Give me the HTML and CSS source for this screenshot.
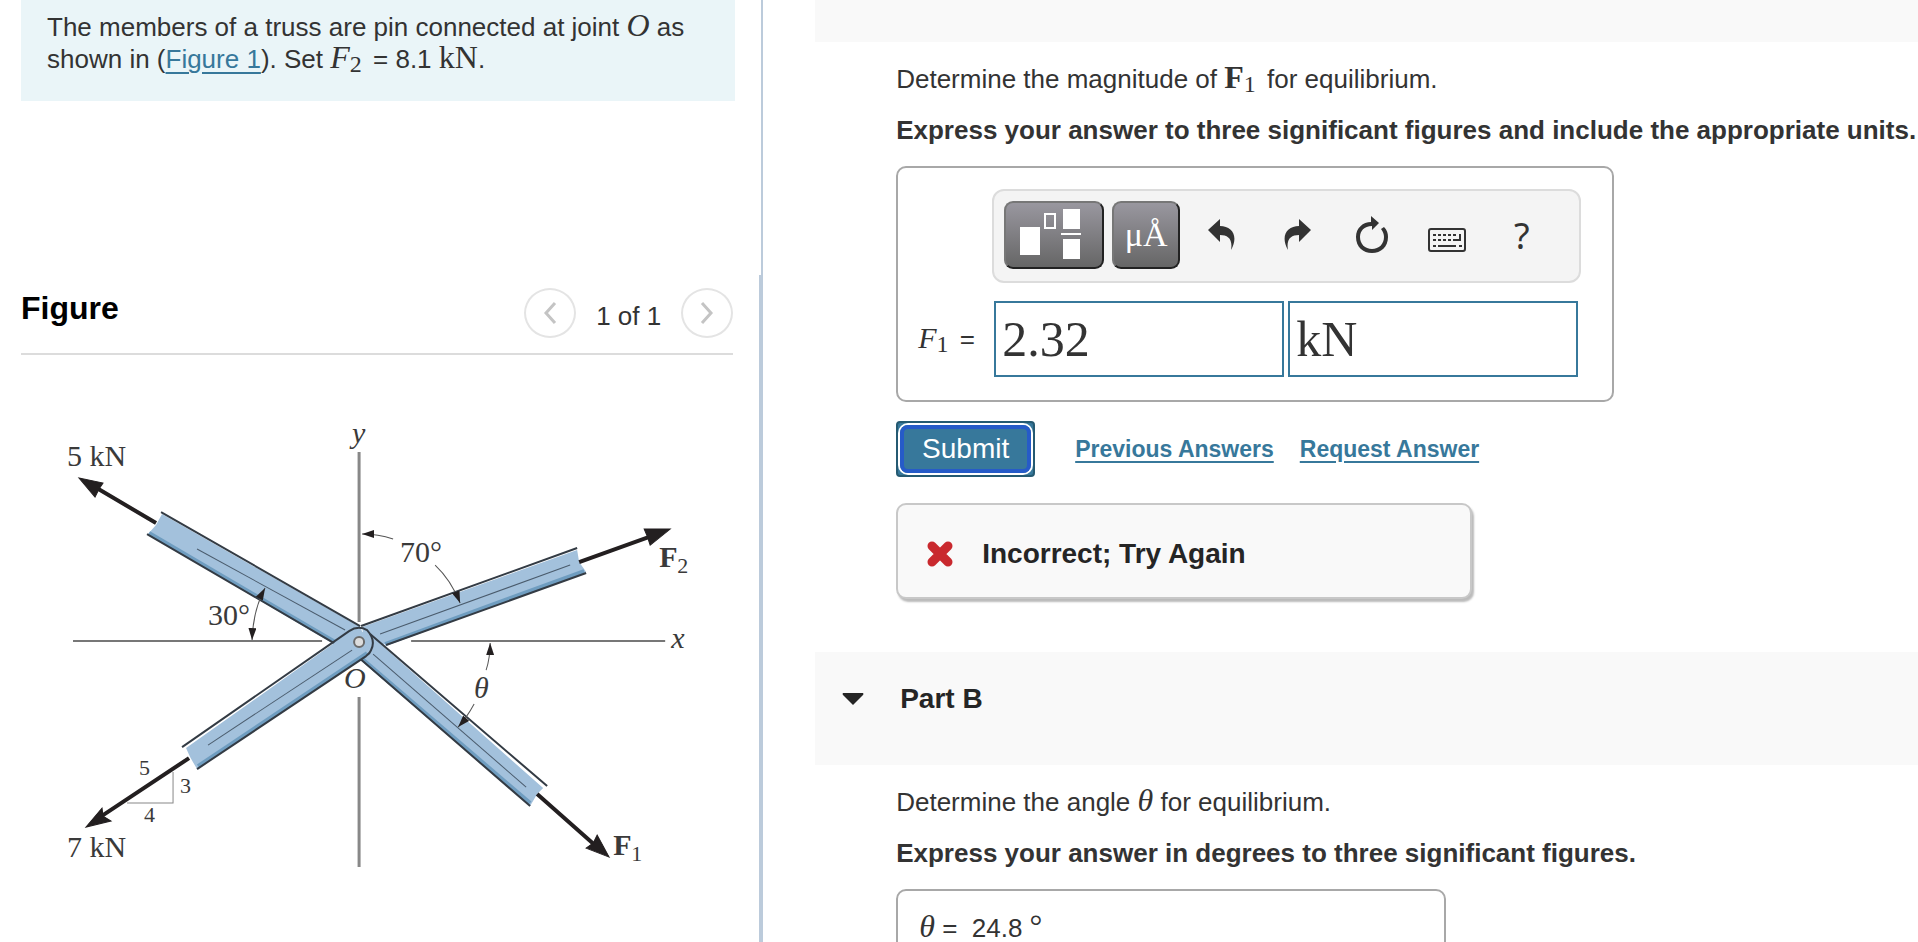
FILE: index.html
```html
<!DOCTYPE html>
<html lang="en">
<head>
  <meta charset="UTF-8">
  <title>Truss Equilibrium</title>
  <link rel="stylesheet" href="styles.css">
</head>
<body>
  <!-- Problem and figure -->
  <aside class="left">
    <section class="problem">
      <p class="intro">The members of a truss are pin connected at joint <i class="math">O</i> as shown in (<a href="#figure">Figure 1</a>). Set <i class="math">F</i><span class="math sub">2</span> = 8.1 <span class="math">kN</span>.</p>
    </section>

    <section class="figure" id="figure">
      <div class="figure-head">
        <h2>Figure</h2>
        <button class="round" aria-label="Previous figure">
          <svg width="14" height="24" viewBox="0 0 14 24"><path d="M12 2 L3 12 L12 22"/></svg>
        </button>
        <span class="count">1 of 1</span>
        <button class="round" aria-label="Next figure">
          <svg width="14" height="24" viewBox="0 0 14 24"><path d="M2 2 L11 12 L2 22"/></svg>
        </button>
      </div>

      <svg class="truss" viewBox="21 400 712 490">
        <defs>
          <marker id="tip" viewBox="0 0 12 8" refX="12" refY="4" markerWidth="12" markerHeight="8" markerUnits="userSpaceOnUse" orient="auto-start-reverse">
            <path d="M0 0 L12 4 L0 8 Z" fill="#231f20"/>
          </marker>
        </defs>

        <!-- axes -->
        <g class="axis">
          <path d="M359 452 V622 M359 697 V867"/>
          <path class="thin" d="M73 641 H322 M411 641 H665"/>
        </g>

        <!-- 5 kN member -->
        <path class="bar" d="M162 514 L360 627 L366 640 L335 645 L148 534 L156 525 Z"/>
        <path class="low" d="M149 533 L335 642"/>
        <path class="edge" d="M161 512 L360 626 M147 534 L334 643"/>
        <path class="mid" d="M197 549 L345 630"/>

        <!-- F2 member -->
        <path class="bar" d="M362 627 L577 550 L579 562 L586 572 L390 644 L365 645 Z"/>
        <path class="low" d="M385 644 L584 571"/>
        <path class="edge" d="M361 626 L577 548 M386 645 L586 573"/>
        <path class="mid" d="M380 634 L570 565"/>

        <!-- F1 member -->
        <path class="bar" d="M368 633 L543 788 L537 794 L530 806 L358 658 Z"/>
        <path class="low" d="M361 658 L530 803"/>
        <path class="edge" d="M370 634 L547 786 M358 657 L530 806"/>
        <path class="mid" d="M373 654 L526 787"/>

        <!-- 7 kN member with the pin -->
        <path class="bar" d="M186 748 L351 631 A15 15 0 0 1 368 654 L197 769 L190 757 Z"/>
        <path class="low" d="M198 766 L367 653"/>
        <path class="edge" d="M182 747 L349 631 Q358 625 367 630 Q376 640 371 650 Q370 653 366 656 L197 769"/>
        <path class="mid" d="M208 745 L352 650"/>
        <circle class="pin" cx="359" cy="642" r="5"/>

        <!-- forces -->
        <g class="force">
          <path d="M156 523 L95 487 M579 562 L654 535 M189 758 L100 817 M537 794 L598 848"/>
        </g>
        <g class="head">
          <path d="M79 478 L103 483 L99 489 L95 497 Z"/>
          <path d="M670 529 L644 529 L647 536 L650 545 Z"/>
          <path d="M86 827 L102 808 L103 816 L111 821 Z"/>
          <path d="M609 857 L597 835 L593 843 L586 848 Z"/>
        </g>

        <!-- angles -->
        <g class="arc">
          <path d="M265 588 Q253 610 252 640" marker-start="url(#tip)" marker-end="url(#tip)"/>
          <path d="M362 534 Q378 534 393 539" marker-start="url(#tip)"/>
          <path d="M435 565 Q451 580 460 603" marker-end="url(#tip)"/>
          <path d="M490 643 Q490 658 486 670" marker-start="url(#tip)"/>
          <path d="M474 704 Q467 717 458 727" marker-end="url(#tip)"/>
          <path class="slope" d="M127 803 H173 V772"/>
        </g>

        <g class="label">
          <text x="67" y="466">5 kN</text>
          <text x="67" y="857">7 kN</text>
          <text x="208" y="625">30°</text>
          <text x="400" y="562">70°</text>
          <text class="it" x="352" y="443">y</text>
          <text class="it" x="671" y="648">x</text>
          <text class="it" x="344" y="688">O</text>
          <text class="it" x="474" y="698">θ</text>
          <text class="vec" x="659" y="567">F</text>
          <text class="vec" x="613" y="855">F</text>
          <text class="small" x="677" y="573">2</text>
          <text class="small" x="631" y="861">1</text>
          <text class="small" x="139" y="775">5</text>
          <text class="small" x="180" y="793">3</text>
          <text class="small" x="144" y="822">4</text>
        </g>
      </svg>
    </section>
  </aside>

  <!-- Parts -->
  <main class="right">
    <div class="band band-a"></div>
    <section class="part">
      <p>Determine the magnitude of <b class="math">F</b><span class="math sub">1</span> for equilibrium.</p>
      <p class="express">Express your answer to three significant figures and include the appropriate units.</p>

      <form class="answer">
        <div class="toolbar">
          <button type="button" class="tool tool-wide" aria-label="Templates">
            <svg width="64" height="54" viewBox="2 0 64 54">
              <path fill="#fff" d="M0 19 H20 V47 H0 Z M43 1 H60 V21 H43 Z M43 31 H60 V51 H43 Z M41 25 H61 V27 H41 Z"/>
              <path fill="none" stroke="#fff" stroke-width="2" d="M25 6 H35 V20 H25 Z"/>
            </svg>
          </button>
          <button type="button" class="tool">μÅ</button>
          <button type="button" class="plain" aria-label="Undo">
            <svg width="28" height="32" viewBox="0 0 28 32"><path d="M0 11 L12 0 V7 C24 7 31 17 23 31 C25 20 20 16 12 16 V23 Z"/></svg>
          </button>
          <button type="button" class="plain" aria-label="Redo">
            <svg width="28" height="32" viewBox="0 0 28 32"><path d="M28 11 L16 0 V7 C4 7 -3 17 5 31 C3 20 8 16 16 16 V23 Z"/></svg>
          </button>
          <button type="button" class="plain" aria-label="Reset">
            <svg width="34" height="38" viewBox="0 0 34 38"><path d="M16 0 L24 7 L17 14 V10 C9 10 5 15 5 21 C5 28 10 33 17 33 C24 33 29 28 29 21 C29 18 28 16 26 13 L29 11 C32 14 33 17 33 21 C33 31 26 37 17 37 C8 37 1 31 1 21 C1 12 8 6 16 6 Z"/></svg>
          </button>
          <button type="button" class="plain" aria-label="Keyboard">
            <svg width="40" height="36" viewBox="0 -10 40 36">
              <rect x="2" y="2" width="36" height="22" rx="2" fill="none" stroke="#333" stroke-width="2"/>
              <path fill="none" stroke="#333" stroke-width="2" stroke-dasharray="3 2" d="M6 8 H29 M6 13 H29"/>
              <path fill="none" stroke="#333" stroke-width="2" d="M6 19 H9 M11 19 H29 M32 19 H35 M33 7 V14 M29 13 H34"/>
            </svg>
          </button>
          <button type="button" class="plain help">?</button>
        </div>
        <div class="fields">
          <label for="value"><i class="math">F</i><span class="math sub">1</span> =</label>
          <input type="text" id="value" value="2.32">
          <input type="text" id="units" value="kN" aria-label="Units">
        </div>
      </form>

      <div class="actions">
        <button class="submit">Submit</button>
        <a href="#previous">Previous Answers</a>
        <a href="#request">Request Answer</a>
      </div>

      <div class="feedback">
        <svg width="28" height="28" viewBox="0 0 28 28"><path d="M6 6 L22 22 M22 6 L6 22" stroke="#c9292e" stroke-width="9" stroke-linecap="round"/></svg>
        Incorrect; Try Again
      </div>
    </section>

    <div class="band band-b">
      <svg width="22" height="12" viewBox="0 0 22 12"><path d="M1 0 H21 Q22 1 21 2 L11 12 L1 2 Q0 1 1 0 Z" fill="#252525"/></svg>
      <h3>Part B</h3>
    </div>
    <section class="part">
      <p>Determine the angle <i class="math">θ</i> for equilibrium.</p>
      <p class="express">Express your answer in degrees to three significant figures.</p>
      <div class="result"><i class="math">θ</i> = &nbsp;24.8 <span class="math">°</span></div>
    </section>
  </main>
</body>
</html>
```
FILE: styles.css
```css
* {
  box-sizing: border-box;
}

body {
  display: flex;
  height: 100vh;
  margin: 0;
  overflow: hidden;
  background-color: #fff;
  color: #333;
  font-family: "Liberation Sans", Arial, sans-serif;
  font-size: 26px;
  line-height: 32px;
}

p, h2, h3 {
  margin: 0;
}

a {
  color: #37789b;
  text-decoration-thickness: 2px;
  text-underline-offset: 4px;
}

button {
  font-family: inherit;
  cursor: pointer;
}

/* math runs keep the line height of the text round them */
.math {
  font-family: "Liberation Serif", "Times New Roman", serif;
  font-size: 32px;
  line-height: 1px;
}

.sub {
  position: relative;
  top: 4px;
  margin-right: 4px;
  font-size: 24px;
}

/* left column */
.left {
  display: flex;
  flex: 0 0 calc(40% - 4px);
  flex-direction: column;
  margin-right: 4px;
}

.problem {
  height: 275px;
  padding: 0 26px 0 21px;
  border-right: 2px solid #bccbdb;
}

.intro {
  min-height: 101px;
  padding: 11px 26px;
  background-color: #eaf5f8;
}

.figure {
  flex: 1;
  padding: 13px 26px 0 21px;
  border-right: 4px solid #bccbdb;
}

.figure-head {
  display: flex;
  align-items: center;
  height: 67px;
  padding-bottom: 15px;
  border-bottom: 2px solid #dcdcdc;
}

.figure-head h2 {
  flex: 1;
  margin-bottom: 10px;
  color: #000;
  font-size: 32px;
}

.round {
  display: flex;
  align-items: center;
  justify-content: center;
  width: 52px;
  height: 50px;
  padding: 0;
  border: 2px solid #e4e4e4;
  border-radius: 50%;
  background-color: #fff;
}

.round path {
  fill: none;
  stroke: #c4c4c4;
  stroke-width: 3;
}

.count {
  margin: 6px 20px 0;
}

.truss {
  display: block;
  width: 100%;
  margin-top: 45px;
}

.axis {
  fill: none;
  stroke: #888;
  stroke-width: 3;
}

.thin {
  stroke: #777;
  stroke-width: 2;
}

.bar {
  fill: #a3c1dc;
}

.low {
  fill: none;
  stroke: #6f9dc0;
  stroke-width: 4;
}

.edge {
  fill: none;
  stroke: #333b44;
  stroke-width: 2;
}

.mid {
  fill: none;
  stroke: #4a5b6c;
  stroke-width: 1;
}

.pin {
  fill: #ddd;
  stroke: #6b6b6b;
  stroke-width: 2;
}

.force {
  fill: none;
  stroke: #231f20;
  stroke-width: 4;
}

.head {
  fill: #231f20;
  stroke: #231f20;
}

.arc {
  fill: none;
  stroke: #555;
  stroke-width: 1;
}

.slope {
  stroke: #888;
}

.label {
  fill: #3a3a3a;
  font-family: "Liberation Serif", "Times New Roman", serif;
  font-size: 30px;
}

.it {
  font-style: italic;
}

.vec {
  font-weight: bold;
}

.small {
  font-size: 22px;
}

/* right column */
.right {
  flex: 1;
  min-width: 0;
  padding-left: 48px;
}

.band {
  background-color: #f9f9f9;
}

.band-a {
  height: 42px;
}

.part {
  padding: 21px 0 0 81px;
  white-space: nowrap;
}

.express {
  margin-top: 19px;
  font-weight: bold;
}

.answer {
  width: 718px;
  margin-top: 20px;
  padding: 21px 31px 23px 20px;
  border: 2px solid #a8a8a8;
  border-radius: 10px;
}

.toolbar {
  display: flex;
  align-items: center;
  height: 94px;
  margin-left: 74px;
  padding: 0 10px 2px;
  border: 2px solid #dcdcdc;
  border-radius: 12px;
  background-color: #f4f4f4;
}

.tool {
  width: 68px;
  height: 68px;
  margin-right: 4px;
  padding: 0;
  border: 2px solid #222;
  border-top-color: #777;
  border-left-color: #777;
  border-radius: 9px;
  background: linear-gradient(#99979f, #666);
  color: #fff;
  font-family: "Liberation Serif", serif;
  font-size: 34px;
}

.tool-wide {
  width: 100px;
  margin-right: 8px;
}

.tool svg {
  display: block;
  margin: 0 auto;
  overflow: visible;
}

.plain {
  display: flex;
  align-items: center;
  justify-content: center;
  width: 75px;
  height: 68px;
  padding: 0;
  border: 0;
  background: none;
  color: #333;
  fill: #333;
}

.help {
  font-family: "Noto Sans", sans-serif;
  font-size: 36px;
}

.fields {
  display: flex;
  gap: 4px;
  align-items: center;
  margin-top: 18px;
}

.fields label {
  width: 72px;
}

.fields .math {
  font-size: 30px;
}

.fields .sub {
  font-size: 24px;
}

.fields input {
  width: 290px;
  height: 76px;
  padding: 0 6px;
  border: 2px solid #37789b;
  color: #333;
  font-family: "Liberation Serif", "Times New Roman", serif;
  font-size: 50px;
}

.actions {
  display: flex;
  align-items: center;
  margin-top: 19px;
}

.actions a {
  margin-right: 26px;
  font-size: 23px;
  font-weight: bold;
}

.submit {
  position: relative;
  width: 139px;
  height: 56px;
  margin-right: 40px;
  padding: 0;
  border: 2px solid #255a72;
  border-radius: 4px;
  background-color: #37789b;
  color: #fff;
  font-size: 28px;
}

/* focus ring */
.submit::before {
  content: "";
  position: absolute;
  inset: 2px;
  border: 4px solid #265bc8;
  border-radius: 8px;
  box-shadow: 0 0 0 2px #fff;
}

.feedback {
  display: flex;
  gap: 28px;
  align-items: center;
  width: 576px;
  height: 96px;
  margin-top: 26px;
  padding: 6px 28px 0;
  border: 2px solid #c8c8c8;
  border-radius: 10px;
  background-color: #f9f9f9;
  box-shadow: 2px 3px 2px #bbb;
  color: #252525;
  font-size: 28px;
  font-weight: bold;
}

.band-b {
  display: flex;
  gap: 36px;
  align-items: center;
  height: 113px;
  margin-top: 53px;
  padding: 0 0 20px 27px;
}

.band-b h3 {
  color: #252525;
  font-size: 28px;
}

.result {
  width: 550px;
  height: 120px;
  margin-top: 20px;
  padding: 21px 21px;
  border: 2px solid #a8a8a8;
  border-radius: 10px;
}
```
